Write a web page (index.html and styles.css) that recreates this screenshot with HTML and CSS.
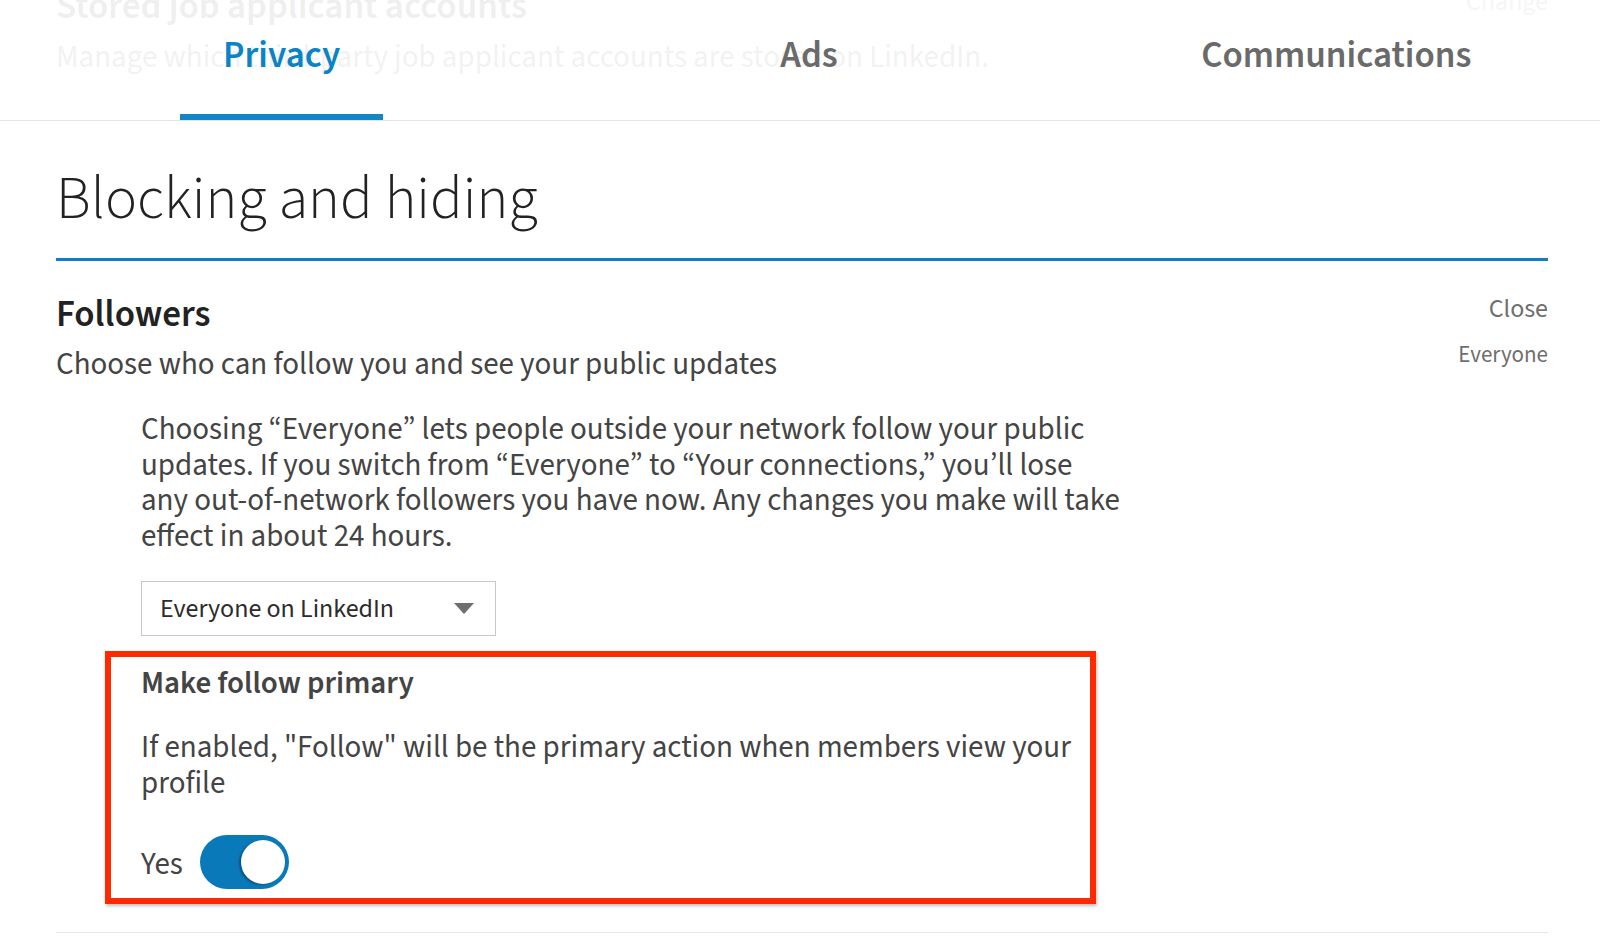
FILE: index.html
```html
<!DOCTYPE html>
<html lang="en">
<head>
<meta charset="utf-8">
<title>Settings – Privacy</title>
<link rel="stylesheet" href="styles.css">
</head>
<body>
<div class="page">
  <header class="tabbar">
    <nav class="tabs">
      <div class="tab"><a class="tab-link active">Privacy</a></div>
      <div class="tab"><a class="tab-link">Ads</a></div>
      <div class="tab"><a class="tab-link">Communications</a></div>
    </nav>
  </header>

  <main class="content">
    <section class="setting ghost">
      <div class="setting-head">
        <div class="setting-text">
          <h2 class="setting-title">Stored job applicant accounts</h2>
          <p class="setting-desc ghost-desc">Manage which third-party job applicant accounts are stored on LinkedIn.</p>
        </div>
        <div class="setting-meta ghost-meta">
          <span class="meta-value">Change</span>
        </div>
      </div>
    </section>

    <section class="group">
      <h1 class="group-title">Blocking and hiding</h1>

      <div class="setting open">
        <div class="setting-head">
          <div class="setting-text">
            <h3 class="setting-title">Followers</h3>
            <p class="setting-desc">Choose who can follow you and see your public updates</p>
          </div>
          <div class="setting-meta">
            <span class="meta-close">Close</span>
            <span class="meta-value">Everyone</span>
          </div>
        </div>

        <div class="setting-body">
          <p class="explain">Choosing “Everyone” lets people outside your network follow your public<br>updates. If you switch from “Everyone” to “Your connections,” you’ll lose<br>any out-of-network followers you have now. Any changes you make will take<br>effect in about 24 hours.</p>

          <div class="select">
            <span class="select-text">Everyone on LinkedIn</span>
            <span class="select-caret"></span>
          </div>

          <div class="highlight">
            <h4 class="option-title">Make follow primary</h4>
            <p class="option-desc">If enabled, "Follow" will be the primary action when members view your profile</p>
            <div class="toggle-row">
              <span class="toggle-label">Yes</span>
              <span class="toggle on"><span class="knob"></span></span>
            </div>
          </div>
        </div>
      </div>
    </section>
  </main>
</div>
</body>
</html>
```
FILE: styles.css
```css
html, body {
  margin: 0;
  padding: 0;
  background: #fff;
  overflow: hidden;
}

body {
  font-family: "Source Sans 3", "Source Sans Pro", "Noto Sans", sans-serif;
  color: #444;
}

h1, h2, h3, h4, p { margin: 0; }

.page {
  position: relative;
  width: 1600px;
  height: 938px;
  overflow: hidden;
}

/* ---------- tab bar (floats over the scrolled content) ---------- */
.tabbar {
  position: absolute;
  top: 0;
  left: 0;
  right: 0;
  z-index: 2;
  height: 121px;
  box-sizing: border-box;
  background: rgba(255, 255, 255, 0.93);
  border-bottom: 1px solid #e3e3e3;
}

.tabs {
  display: flex;
  align-items: flex-end;
  height: 100%;
  padding-left: 18px;
}

.tab {
  flex: 1;
  text-align: center;
}

.tab-link {
  display: inline-block;
  padding: 0 43px 36px;
  border-bottom: 6px solid transparent;
  font-size: 37px;
  line-height: 44px;
  font-weight: 600;
  color: #6a6a6a;
  cursor: pointer;
}

.tab-link.active {
  color: #0b84c5;
  border-bottom-color: #1287c6;
}

/* ---------- content ---------- */
.content {
  padding: 0 52px 0 56px;
}

.setting-head {
  display: flex;
  justify-content: space-between;
  align-items: flex-start;
}

.setting-title {
  font-size: 37px;
  line-height: 44px;
  font-weight: 600;
  color: #222;
}

.setting-desc {
  margin-top: 9px;
  font-size: 31px;
  line-height: 36px;
  color: #444;
}

.setting-meta {
  display: flex;
  flex-direction: column;
  align-items: flex-end;
}

.meta-close {
  font-size: 26px;
  line-height: 32px;
  color: #6f6f6f;
}

.meta-value {
  margin-top: 16px;
  font-size: 23px;
  line-height: 28px;
  color: #6f6f6f;
}

/* section scrolled up under the tab bar */
.ghost {
  margin-top: -15px;
  padding-bottom: 34px;
  border-bottom: 1px solid #e6e6e6;
}

.ghost-desc { margin-top: 10px; }

.ghost-meta { margin-top: 2px; }
.ghost-meta .meta-value {
  margin-top: 0;
  font-size: 26px;
  line-height: 30px;
}

/* ---------- group ---------- */
.group-title {
  margin-top: 54px;
  padding-bottom: 22px;
  border-bottom: 3px solid #0e80c2;
  font-size: 60px;
  line-height: 72px;
  font-weight: 300;
  color: #222;
}

.setting.open {
  padding-top: 32px;
  border-bottom: 1px solid #e6e6e6;
}

.setting-body {
  padding: 0 0 28px 85px;
}

.explain {
  margin-top: 30px;
  width: 1000px;
  font-size: 31px;
  line-height: 35.7px;
  color: #444;
}

.select {
  margin-top: 26px;
  width: 355px;
  height: 55px;
  box-sizing: border-box;
  display: flex;
  align-items: center;
  justify-content: space-between;
  padding: 0 21px 0 18px;
  border: 1px solid #c9c9c9;
  background: #fff;
}

.select-text {
  font-size: 26px;
  color: #2c2c2c;
}

.select-caret {
  width: 0;
  height: 0;
  border-left: 10px solid transparent;
  border-right: 10px solid transparent;
  border-top: 11px solid #6e6e6e;
}

/* annotation frame */
.highlight {
  margin: 15px 0 0 -36px;
  width: 991px;
  box-sizing: border-box;
  padding: 8.5px 10px 9px 30px;
  border: 6px solid #ff2a00;
  box-shadow: 1px 2px 3px rgba(0, 0, 0, 0.25);
}

.option-title {
  font-size: 31px;
  line-height: 36px;
  font-weight: 600;
  color: #444;
}

.option-desc {
  margin-top: 28px;
  font-size: 31px;
  line-height: 36px;
  color: #444;
}

.toggle-row {
  margin-top: 33.7px;
  display: flex;
  align-items: center;
  gap: 17px;
}

.toggle-label {
  margin-top: 4px;
  font-size: 31px;
  line-height: 36px;
  color: #444;
}

.toggle {
  width: 89px;
  height: 54px;
  box-sizing: border-box;
  border-radius: 27px;
  background: #0a79b9;
  display: flex;
  align-items: center;
  justify-content: flex-end;
  padding-right: 4px;
}

.knob {
  width: 44px;
  height: 44px;
  border-radius: 50%;
  background: #fff;
  box-shadow: -2px 1px 2px rgba(0, 0, 0, 0.3);
}
```
